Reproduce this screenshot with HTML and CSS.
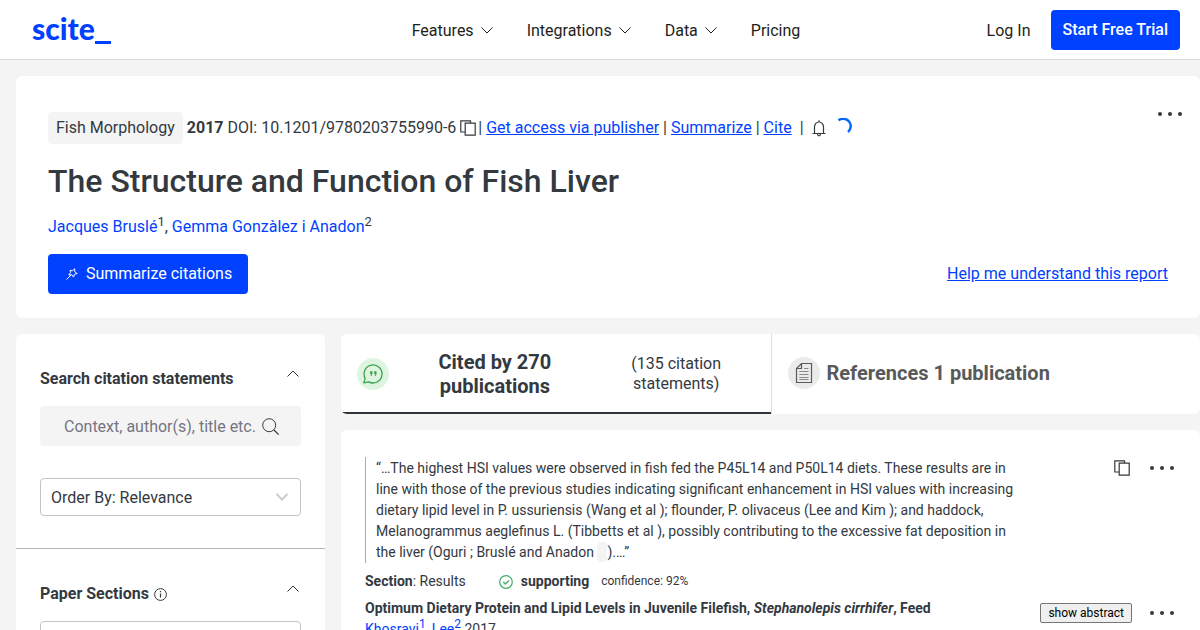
FILE: index.html
```html
<!DOCTYPE html>
<html lang="en">
<head>
<meta charset="utf-8">
<meta name="viewport" content="width=device-width, initial-scale=1">
<title>The Structure and Function of Fish Liver - scite</title>
<link rel="stylesheet" href="styles.css">
</head>
<body>
<svg class="sprite" aria-hidden="true">
  <symbol id="chevron" viewBox="0 0 12 7"><path d="M.5.5 6 6 11.500.5" fill="none" stroke="currentColor"/></symbol>
  <symbol id="copy" viewBox="0 0 16 16"><path d="M5 12H.8V.8H10.500V3M5.200 3.200h10v12h-10z" fill="none" stroke="currentColor" stroke-width="1.200"/></symbol>
  <symbol id="dots" viewBox="0 0 24 4"><circle cx="2" cy="2" r="2"/><circle cx="12" cy="2" r="2"/><circle cx="22" cy="2" r="2"/></symbol>
</svg>

<header class="site-header">
  <a class="logo" href="#">scite<span class="logo-bar"></span></a>
  <nav class="nav">
    <button class="nav-item">Features <svg class="chevron"><use href="#chevron"/></svg></button>
    <button class="nav-item">Integrations <svg class="chevron"><use href="#chevron"/></svg></button>
    <button class="nav-item">Data <svg class="chevron"><use href="#chevron"/></svg></button>
    <a class="nav-item" href="#">Pricing</a>
  </nav>
  <div class="account">
    <a class="nav-item" href="#">Log In</a>
    <a class="trial" href="#">Start Free Trial</a>
  </div>
</header>

<main class="page">
  <section class="card paper">
    <div class="paper-top">
      <div class="meta">
        <span class="journal">Fish Morphology</span>
        <strong>2017</strong>
        <span>DOI: 10.1201/9780203755990-6</span>
        <span class="copy-doi">
          <button class="icon-button" aria-label="Copy DOI"><svg class="icon-copy"><use href="#copy"/></svg></button>
          <span>|</span>
        </span>
        <a class="text-link" href="#">Get access via publisher</a>
        <span>|</span>
        <a class="text-link" href="#">Summarize</a>
        <span>|</span>
        <a class="text-link" href="#">Cite</a>
        <span class="last-bar">|</span>
        <button class="icon-button bell" aria-label="Set up alert"><svg class="icon-bell" viewBox="0 0 14 17"><path d="M.5 13.500h13M2.500 13.300V7a4.500 5 0 0 1 9 0v6.300M7 2V.3M5.600 14a1.400 1.800 0 0 0 2.800 0" fill="none" stroke="currentColor" stroke-width="1.200"/></svg></button>
        <svg class="spinner" viewBox="0 0 16 16"><path d="M2.500 2.400A7 7 0 0 1 12 14" fill="none" stroke="#0066ff" stroke-width="2.400"/></svg>
      </div>
      <button class="icon-button dots-button" aria-label="More options"><svg class="icon-dots"><use href="#dots"/></svg></button>
    </div>
    <h1>The Structure and Function of Fish Liver</h1>
    <p class="authors"><a href="#">Jacques Bruslé</a><sup>1</sup>, <a href="#">Gemma Gonzàlez i Anadon</a><sup>2</sup></p>
    <div class="paper-actions">
      <button class="summarize"><svg class="icon-wand" viewBox="0 0 12 12"><path d="M.5 11.500 5 7M4 2.300l2.300.5L8.700.8l.1 3 2.400 1.700-2.800.9-.8 2.700-1.800-2.300-3 .1 1.700-2.400z" fill="none" stroke="currentColor"/></svg>Summarize citations</button>
      <a class="text-link" href="#">Help me understand this report</a>
    </div>
  </section>

  <div class="columns">
    <aside class="card filters">
      <section class="filter">
        <div class="filter-head">
          <h2>Search citation statements</h2>
          <button class="icon-button" aria-label="Collapse search"><svg class="chevron chevron-up"><use href="#chevron"/></svg></button>
        </div>
        <label class="search">
          <input type="text" aria-label="Search citation statements" placeholder="Context, author(s), title etc.">
          <svg class="icon-search" viewBox="0 0 17 17"><circle cx="7.200" cy="7.200" r="6.500" fill="none" stroke="currentColor"/><path d="m12 12 4.600 4.600" stroke="currentColor" stroke-width="1.200"/></svg>
        </label>
        <div class="select">
          <select aria-label="Order results"><option>Order By: Relevance</option><option>Order By: Recency</option></select>
          <svg class="select-arrow" viewBox="0 0 12 8"><path d="m1 1.500 5 5 5-5" fill="none" stroke="currentColor" stroke-width="2" stroke-linecap="round"/></svg>
        </div>
      </section>
      <section class="filter">
        <div class="filter-head">
          <h2>Paper Sections <svg class="icon-info" viewBox="0 0 13 13"><circle cx="6.500" cy="6.500" r="5.900" fill="none" stroke="currentColor"/><path d="M6.500 5.500v4M6.500 3v1.300" stroke="currentColor" stroke-width="1.200"/></svg></h2>
          <button class="icon-button" aria-label="Collapse sections"><svg class="chevron chevron-up"><use href="#chevron"/></svg></button>
        </div>
        <div class="select">
          <select aria-label="Paper section"><option></option></select>
        </div>
      </section>
    </aside>

    <div class="results">
      <div class="tabs" role="tablist">
        <button class="tab tab-active" role="tab" aria-selected="true">
          <svg class="tab-icon" viewBox="0 0 32 32"><circle cx="16" cy="16" r="16" fill="#dff5e1"/><path d="M6.800 24.900 8.200 20.400A9 9 0 1 1 11.800 23.900z" fill="none" stroke="#36a34a" stroke-width="1.300" stroke-linejoin="round"/><path d="M13.200 13.500h2v2.200q0 1.800-1.400 2.300q.5-1 .4-2.300h-1zM17.300 13.500h2v2.200q0 1.800-1.400 2.300q.5-1 .4-2.300h-1z" fill="#36a34a" stroke="#36a34a" stroke-width=".4"/></svg>
          <span class="tab-texts">
            <span class="tab-title">Cited by 270<br>publications</span>
            <span class="tab-note">(135 citation<br>statements)</span>
          </span>
        </button>
        <button class="tab" role="tab" aria-selected="false">
          <svg class="tab-icon" viewBox="0 0 32 32"><circle cx="16" cy="16" r="16" fill="#ebebeb"/><path d="M13.500 6.500h10v19h-15v-14zv5h-5" fill="none" stroke="#58595b" stroke-width="1.200"/><path d="M16 11.500h4.500M11.300 14.500h9.200M11.300 17.500h9.200M11.300 20.500h9.200M11.300 22.500h9.200" stroke="#888"/></svg>
          <span class="tab-title">References 1 publication</span>
        </button>
      </div>

      <article class="card citation">
        <div class="quote-row">
          <blockquote>“…The highest HSI values were observed in fish fed the P45L14 and P50L14 diets. These results are in<br>line with those of the previous studies indicating significant enhancement in HSI values with increasing<br>dietary lipid level in P. ussuriensis (Wang et al ); flounder, P. olivaceus (Lee and Kim ); and haddock,<br>Melanogrammus aeglefinus L. (Tibbetts et al ), possibly contributing to the excessive fat deposition in<br>the liver (Oguri ; Bruslé and Anadon <span class="ref-mark"></span>).…”</blockquote>
          <div class="quote-actions">
            <button class="icon-button" aria-label="Copy statement"><svg class="icon-copy"><use href="#copy"/></svg></button>
            <button class="icon-button" aria-label="More options"><svg class="icon-dots"><use href="#dots"/></svg></button>
          </div>
        </div>
        <div class="labels">
          <span class="section-label"><strong>Section</strong>: Results</span>
          <svg class="icon-check" viewBox="0 0 14 14"><circle cx="7" cy="7" r="6.300" fill="none" stroke="#43ac6a" stroke-width="1.200"/><path d="m4.300 7 2 2L10 5.500" fill="none" stroke="#43ac6a" stroke-width="1.300"/></svg>
          <strong class="supporting">supporting</strong>
          <span class="confidence">confidence: 92%</span>
        </div>
        <div class="source-row">
          <div class="source">
            <h3>Optimum Dietary Protein and Lipid Levels in Juvenile Filefish, <em>Stephanolepis cirrhifer</em>, Feed</h3>
            <p><a href="#">Khosravi<sup>1</sup></a>, <a href="#">Lee<sup>2</sup></a> 2017</p>
          </div>
          <div class="source-actions">
            <button class="abstract">show abstract</button>
            <button class="icon-button" aria-label="More options"><svg class="icon-dots"><use href="#dots"/></svg></button>
          </div>
        </div>
      </article>
    </div>
  </div>
</main>
</body>
</html>
```
FILE: styles.css
```css
* { box-sizing: border-box; }

body {
  margin: 0;
  height: 100vh;
  overflow: hidden;
  background: #f4f4f4;
  color: #33393f;
  font: 16px/24px Roboto, "Liberation Sans", sans-serif;
}

h1, h2, h3, p, blockquote { margin: 0; }
a { color: #0041ff; text-decoration: none; }
button, input, select { font: inherit; color: inherit; }
svg { display: block; flex: none; }
sup { font-size: 13px; line-height: 0; }

.sprite { position: absolute; width: 0; height: 0; }
.text-link { text-decoration: underline; }
.icon-button {
  display: flex;
  padding: 0;
  border: 0;
  background: none;
}
.icon-copy { width: 16px; height: 16px; }
.icon-dots { width: 24px; height: 4px; fill: currentColor; }
.chevron { width: 12px; height: 7px; }
.chevron-up { transform: rotate(180deg); }
.card { background: #fff; border-radius: 6px; }

.site-header {
  display: grid;
  grid-template-columns: 1fr auto 1fr;
  align-items: center;
  height: 60px;
  padding: 0 20px 0 32px;
  background: #fff;
  border-bottom: 1px solid #d8d8d8;
}
.logo {
  display: flex;
  align-items: flex-end;
  padding-bottom: 4px;
  font: 900 30px/32px Lato, sans-serif;
}
.logo-bar { width: 16px; height: 3px; background: #0041ff; }
.nav { display: flex; gap: 34px; }
.nav-item {
  display: flex;
  align-items: center;
  gap: 7px;
  padding: 2px 0 0;
  border: 0;
  background: none;
  color: #1e1e20;
}
.account { display: flex; justify-content: flex-end; align-items: center; gap: 20px; }
.trial {
  padding: 8px 12px;
  border-radius: 4px;
  background: #0041ff;
  color: #fff;
  font-weight: 500;
}

.page { padding: 16px 0 0 16px; }

.paper { padding: 36px 32px 24px; }
.paper-top { display: flex; justify-content: space-between; margin-right: -14px; }
.dots-button { height: 4px; }
.meta { display: flex; align-items: center; gap: 4px; height: 32px; }
.journal { padding: 4px 8px; background: #f4f4f4; border-radius: 4px; }
.copy-doi { display: flex; align-items: center; gap: 2px; }
.last-bar { margin-left: 4px; }
.bell { margin-left: 4px; }
.icon-bell { width: 14px; height: 17px; }
.spinner { width: 16px; height: 16px; margin: 0 0 4px 6px; }
h1 { margin-top: 16px; font-size: 32px; line-height: 42px; font-weight: 500; }
.authors { margin-top: 13px; }
.paper-actions { display: flex; justify-content: space-between; align-items: center; margin-top: 15px; }
.summarize {
  display: flex;
  align-items: center;
  gap: 8px;
  padding: 8px 16px 8px 18px;
  border: 0;
  border-radius: 4px;
  background: #0041ff;
  color: #fff;
}
.icon-wand { width: 12px; height: 12px; }

.columns {
  display: grid;
  grid-template-columns: 309px 1fr;
  gap: 16px;
  margin-top: 16px;
}

.filter { padding: 32px 24px; border-bottom: 1px solid #b5b5b5; }
.filter-head { display: flex; justify-content: space-between; margin-bottom: 14px; }
.filter-head .icon-button { width: 16px; height: 14px; align-items: center; justify-content: center; }
h2 { display: flex; align-items: center; gap: 5px; font-size: 16px; line-height: 26px; font-weight: 700; }
.icon-info { width: 13px; height: 13px; }
.search {
  display: flex;
  align-items: center;
  height: 40px;
  margin-bottom: 32px;
  padding: 0 22px 0 24px;
  border-radius: 4px;
  background: #f4f4f4;
}
.search input { flex: 1; min-width: 0; padding: 2px 0 0; border: 0; background: none; }
.search input::placeholder { color: #757583; }
.icon-search { width: 17px; height: 17px; }
.select { position: relative; }
.select select {
  display: block;
  width: 100%;
  height: 38px;
  padding: 2px 10px 0;
  border: 1px solid #c4c4c4;
  border-radius: 4px;
  background: #fff;
  appearance: none;
}
.select-arrow { position: absolute; right: 13px; top: 15px; width: 12px; height: 8px; color: #ccc; }

.tabs { display: grid; grid-template-columns: 1fr 1fr; height: 80px; overflow: hidden; border-radius: 6px; background: #fff; }
.tab {
  display: flex;
  align-items: center;
  gap: 7px;
  padding: 0 16px 2px;
  border: 0;
  border-left: 1px solid #ddd;
  background: none;
  color: #58595b;
}
.tab-active {
  gap: 0;
  padding: 2px 0 0 16px;
  border-left: 0;
  border-bottom: 2px solid #2e353d;
  color: #33393f;
}
.tab-texts { flex: 1; display: flex; justify-content: center; align-items: center; gap: 80px; }
.tab-icon { width: 32px; height: 32px; }
.tab-title { font-size: 20px; line-height: 24px; font-weight: 700; }
.tab-note { line-height: 20px; }

.citation { margin-top: 16px; padding: 27px 26px 24px 24px; font-size: 14px; line-height: 21px; }
.quote-row { display: flex; justify-content: space-between; }
blockquote { padding: 1px 0 0 10px; border-left: 1px solid #aaa; white-space: nowrap; }
.ref-mark { display: inline-block; width: 10px; height: 20px; border-radius: 4px; background: #f4f4f4; vertical-align: top; }
.quote-actions { display: flex; align-items: center; gap: 20px; height: 21px; }
.labels { display: flex; align-items: center; margin-top: 8px; }
.icon-check { width: 14px; height: 14px; margin: 0 8px 0 33px; }
.confidence { margin-left: 12px; font-size: 12px; }
.source-row { display: flex; justify-content: space-between; margin-top: 6px; }
h3 { font-size: 14px; line-height: 21px; font-weight: 700; }
.source sup { font-size: 12px; }
.source-actions { display: flex; align-items: center; gap: 18px; height: 30px; }
.abstract {
  height: 20px;
  padding: 0 7px;
  border: 1px solid #767676;
  border-radius: 2px;
  background: #efefef;
  color: #000;
  font-size: 12px;
  line-height: 18px;
}
```
